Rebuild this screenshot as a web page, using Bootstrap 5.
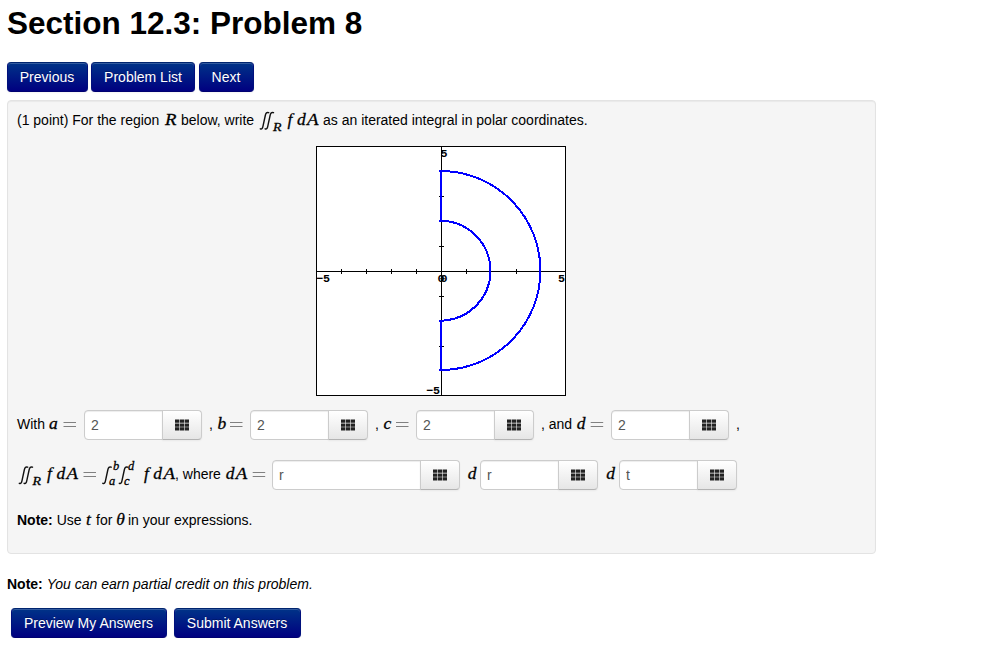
<!DOCTYPE html>
<html lang="en">
<head>
<meta charset="utf-8">
<meta name="viewport" content="width=device-width, initial-scale=1">
<title>Section 12.3: Problem 8</title>
<link href="https://cdn.jsdelivr.net/npm/bootstrap@5.3.0/dist/css/bootstrap.min.css" rel="stylesheet">
<style>
body{font:14px/20px "Liberation Sans",Arial,sans-serif;color:#000;padding:3px 0 0 7px;overflow:hidden}
h1{font-size:31.5px;line-height:40px;margin:0 0 19px}
.btn-ww{--bs-btn-color:#fff;--bs-btn-padding-y:4px;--bs-btn-font-size:14px;--bs-btn-line-height:20px;--bs-btn-border-radius:4px;height:30px;white-space:nowrap;padding-left:0;padding-right:1px;
 background:linear-gradient(#003388,#000080);border-color:#00246f #00107c #000070;box-shadow:inset 0 1px 0 rgba(255,255,255,.2),0 1px 2px rgba(0,0,0,.05);text-shadow:0 -1px 0 rgba(0,0,0,.25)}
.w-prev{width:81px}.w-list{width:104px;margin:0 4px 0 3px;padding-right:0}.w-next{width:55px}.w-preview{width:156px}.w-submit{width:127px}
.problem{width:869px;height:454px;margin-top:8px;padding:9px;background:#f5f5f5;border:1px solid #e3e3e3;border-radius:4px;box-shadow:inset 0 1px 1px rgba(0,0,0,.05)}
.line{height:20px;white-space:pre}
.math{display:block;flex:none;height:30px;overflow:visible;font-family:"Liberation Serif","Times New Roman",serif;font-style:italic;font-size:17.5px;fill:#000;stroke:#000;stroke-width:.3px}
.math .sub{font-size:12.5px}
.math path,#integral{fill:none;stroke:#111;stroke-width:1.4px;stroke-linecap:round}
.math .eq{stroke:#808080;stroke-width:1px;stroke-linecap:butt}
.graph{display:block;margin:16px auto 0;transform:translateX(-1px);overflow:visible}
.row-h{height:30px;white-space:pre}
.row-h>span,.row-h>.math{margin-bottom:2px}
.answer{height:30px;flex:none;width:118px;flex-wrap:nowrap}
.answer.wide{width:188px}
.answer .form-control{font-size:14px;line-height:20px;padding:4px 6px;height:30px;color:#555;border-color:#ccc;border-radius:4px 0 0 4px;box-shadow:inset 0 1px 1px rgba(0,0,0,.075);min-width:0}
.answer .btn{width:40px;height:30px;padding:0 0 1px;flex:none;border:1px solid #ccc;border-bottom-color:#b3b3b3;border-radius:0 4px 4px 0;background:linear-gradient(#fff,#e6e6e6);box-shadow:inset 0 1px 0 rgba(255,255,255,.2),0 1px 2px rgba(0,0,0,.05)}
.answer .btn svg{display:block;margin:0 auto}
</style>
<script src="https://cdn.jsdelivr.net/npm/bootstrap@5.3.0/dist/js/bootstrap.bundle.min.js" defer></script>
</head>
<body>
<svg width="0" height="0" class="d-none" aria-hidden="true">
 <defs>
  <symbol id="keys" viewBox="0 0 14 12"><path fill="#222" d="M0 .5h4.300v3.300H0zM4.900 .5h4.300v3.300H4.900zM9.800 .5H14v3.300H9.800zM0 4.400h4.300v3.300H0zM4.900 4.400h4.300v3.300H4.900zM9.800 4.400H14v3.300H9.800zM0 8.300h4.300v3.300H0zM4.900 8.300h4.300v3.300H4.900zM9.800 8.300H14v3.300H9.800z"/></symbol>
  <path id="integral" d="M.8 24.300c1.500 .7 2.300-.4 2.700-2.600L5.800 11c.5-2.600 1.500-3.500 3.400-2.800"/>
 </defs>
</svg>
<h1 class="fw-bold">Section 12.3: Problem 8</h1>
<div class="d-flex">
 <a class="btn btn-ww w-prev" href="#">Previous</a>
 <a class="btn btn-ww w-list" href="#">Problem List</a>
 <a class="btn btn-ww w-next" href="#">Next</a>
</div>
<main class="problem">
 <div class="line d-flex align-items-center"><span style="width:147px">(1 point) For the region</span><svg class="math" width="17" viewBox="0 0 17 30"><text x="1" y="20" textLength="11.500" lengthAdjust="spacingAndGlyphs">R</text></svg><span style="width:78px">below, write</span><svg class="math" width="64" viewBox="0 0 64 30">
  <use href="#integral" x="0.500" y="-.5"/><use href="#integral" x="5.300" y="-.5"/>
  <text class="sub" x="14" y="26" textLength="8.500" lengthAdjust="spacingAndGlyphs">R</text><text x="28.500" y="20">f</text><text x="38" y="20">d</text><text x="48" y="20" textLength="11.500" lengthAdjust="spacingAndGlyphs">A</text></svg><span>as an iterated integral in polar coordinates.</span></div>
 <svg class="graph" width="250" height="250" viewBox="0 0 250 250" shape-rendering="crispEdges">
  <rect x=".5" y=".5" width="249" height="249" fill="#fff" stroke="#000"/>
  <path fill="none" stroke="#000" d="M0 125.500h250M125.500 0v250M25.500 123v5M50.500 123v5M75.500 123v5M100.500 123v5M150.500 123v5M200.500 123v5M123 50.500h5M123 100.500h5M123 150.500h5M123 200.500h5"/>
  <g font-family="Liberation Mono,monospace" font-weight="bold" font-size="11.700"><text x="124.500" y="11">5</text><text x="0" y="136">−5</text><text x="242" y="136">5</text><text x="110" y="248">−5</text><text x="121.500" y="136">0</text><text x="124.500" y="136">0</text></g>
  <path fill="none" stroke="#00f" stroke-width="2" d="M123 25h5A100 100 0 0 1 224.500 125 100 100 0 0 1 128 224h-5M125 25v50M123 75h5A50 50 0 0 1 174.500 125 50 50 0 0 1 128 174.500h-5M125 174v50"/>
 </svg>
 <div class="row-h d-flex align-items-center" style="margin-top:14px">
  <span style="width:31px">With</span><svg class="math" width="36" viewBox="0 0 36 30"><text x="1" y="20">a</text><path class="eq" d="M15.500 13.500h12.500M15.500 17.500h12.500"/></svg>
  <div class="input-group answer"><input class="form-control" value="2" aria-label="a"><button class="btn" aria-label="Equation editor"><svg width="14" height="12"><use href="#keys"/></svg></button></div>
  <span style="width:15px;padding-left:7px">,</span><svg class="math" width="33" viewBox="0 0 33 30"><text x="0.500" y="20">b</text><path class="eq" d="M13 13.500h12.500M13 17.500h12.500"/></svg>
  <div class="input-group answer"><input class="form-control" value="2" aria-label="b"><button class="btn" aria-label="Equation editor"><svg width="14" height="12"><use href="#keys"/></svg></button></div>
  <span style="width:15px;padding-left:7px">,</span><svg class="math" width="33" viewBox="0 0 33 30"><text x="0.500" y="20">c</text><path class="eq" d="M13 13.500h12.500M13 17.500h12.500"/></svg>
  <div class="input-group answer"><input class="form-control" value="2" aria-label="c"><button class="btn" aria-label="Equation editor"><svg width="14" height="12"><use href="#keys"/></svg></button></div>
  <span style="width:42px;padding-left:7px">, and</span><svg class="math" width="35" viewBox="0 0 35 30"><text x="0.800" y="20">d</text><path class="eq" d="M14.700 13.500h12.500M14.700 17.500h12.500"/></svg>
  <div class="input-group answer"><input class="form-control" value="2" aria-label="d"><button class="btn" aria-label="Equation editor"><svg width="14" height="12"><use href="#keys"/></svg></button></div>
  <span style="padding-left:7px">,</span>
 </div>
 <div class="row-h d-flex align-items-center" style="margin-top:20px">
  <svg class="math" width="158" viewBox="0 0 158 30">
   <use href="#integral" x="1.500"/><use href="#integral" x="6.300"/>
   <text class="sub" x="15.500" y="26" textLength="8.500" lengthAdjust="spacingAndGlyphs">R</text><text x="30" y="20">f</text><text x="39.500" y="20">d</text><text x="49.500" y="20" textLength="11.500" lengthAdjust="spacingAndGlyphs">A</text>
   <path class="eq" d="M66.500 13.500h12.500M66.500 17.500h12.500"/>
   <use href="#integral" x="85"/><use href="#integral" x="101.500"/>
   <text class="sub" x="96" y="11">b</text><text class="sub" x="92" y="26">a</text><text class="sub" x="111" y="11">d</text><text class="sub" x="107" y="26">c</text>
   <text x="127" y="20">f</text><text x="136.300" y="20">d</text><text x="146.500" y="20" textLength="11.500" lengthAdjust="spacingAndGlyphs">A</text>
  </svg><span style="width:50px">, where</span><svg class="math" width="47" viewBox="0 0 47 30"><text x="0.800" y="20">d</text><text x="10.800" y="20" textLength="11.500" lengthAdjust="spacingAndGlyphs">A</text><path class="eq" d="M27.700 13.500h12.500M27.700 17.500h12.500"/></svg>
  <div class="input-group answer wide"><input class="form-control" value="r" aria-label="integrand"><button class="btn" aria-label="Equation editor"><svg width="14" height="12"><use href="#keys"/></svg></button></div>
  <svg class="math" width="20" viewBox="0 0 20 30"><text x="7.800" y="20">d</text></svg>
  <div class="input-group answer"><input class="form-control" value="r" aria-label="inner variable"><button class="btn" aria-label="Equation editor"><svg width="14" height="12"><use href="#keys"/></svg></button></div>
  <svg class="math" width="21" viewBox="0 0 21 30"><text x="8.300" y="20">d</text></svg>
  <div class="input-group answer"><input class="form-control" value="t" aria-label="outer variable"><button class="btn" aria-label="Equation editor"><svg width="14" height="12"><use href="#keys"/></svg></button></div>
 </div>
 <div class="line d-flex align-items-center" style="margin-top:20px"><span style="width:69px"><b>Note:</b> Use</span><svg class="math" width="10" viewBox="0 0 10 30"><text x="0" y="20">t</text></svg><span style="width:20px">for</span><svg class="math" width="12" viewBox="0 0 12 30"><text x="0.300" y="20">θ</text></svg><span>in your expressions.</span></div>
</main>
<div style="margin-top:20px"><b>Note:</b> <i>You can earn partial credit on this problem.</i></div>
<div class="d-flex" style="margin:14px 0 0 4px;gap:7px">
 <button class="btn btn-ww w-preview">Preview My Answers</button>
 <button class="btn btn-ww w-submit">Submit Answers</button>
</div>
</body>
</html>
